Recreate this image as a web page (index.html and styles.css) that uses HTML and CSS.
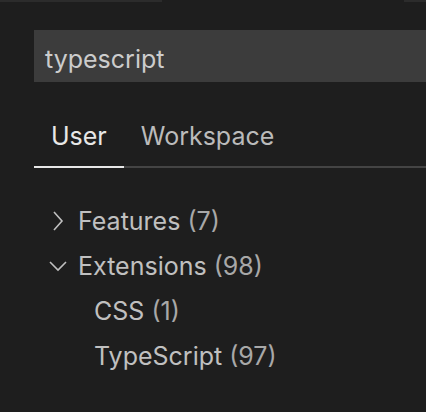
FILE: index.html
```html
<!DOCTYPE html>
<html>
<head>
<meta charset="utf-8">
<link rel="stylesheet" href="styles.css">
</head>
<body>
<div class="topstrip"><span class="seg seg-left"></span><span class="seg seg-right"></span></div>
<div class="panel">
  <div class="search">typescript</div>
  <div class="tabs">
    <div class="tab active">User</div>
    <div class="tab">Workspace</div>
    <div class="tab-rest"></div>
  </div>
  <ul class="tree">
    <li class="row lvl1">
      <svg class="chev" width="20" height="20" viewBox="0 0 20 20"><path d="M6 1 L14 10 L6 19" fill="none" stroke="#c0c0c0" stroke-width="1.6"/></svg>
      <span class="text">Features <span class="count">(7)</span></span>
    </li>
    <li class="row lvl1">
      <svg class="chev" width="20" height="20" viewBox="0 0 20 20"><path d="M2 6 L10 14 L18 6" fill="none" stroke="#c0c0c0" stroke-width="1.6"/></svg>
      <span class="text">Extensions <span class="count">(98)</span></span>
    </li>
    <li class="row lvl2"><span class="text">CSS <span class="count">(1)</span></span></li>
    <li class="row lvl2"><span class="text">TypeScript <span class="count">(97)</span></span></li>
  </ul>
</div>
</body>
</html>
```

FILE: styles.css
```css
html, body {
  margin: 0;
  padding: 0;
  background: #1e1e1e;
  width: 426px;
  height: 412px;
  overflow: hidden;
  font-family: Inter, "Liberation Sans", sans-serif;
}
.topstrip {
  display: flex;
  justify-content: space-between;
  height: 2px;
}
.seg { display: block; height: 2px; background: #2c2c2c; }
.seg-left { width: 162px; }
.seg-right { width: 22px; }
.panel {
  padding-left: 34px;
  padding-top: 28px;
}
.search {
  height: 52px;
  background: #3c3c3c;
  color: #cccccc;
  font-size: 25px;
  line-height: 58px;
  padding-left: 11px;
  box-sizing: border-box;
}
.tabs {
  display: flex;
  margin-top: 28px;
  align-items: flex-end;
}
.tab {
  font-size: 25px;
  color: #bbbbbb;
  padding: 0 17px 0 17px;
  height: 56px;
  line-height: 52px;
  border-bottom: 2px solid #444444;
}
.tab.active {
  color: #e7e7e7;
  border-bottom-color: #e7e7e7;
}
.tab-rest {
  flex: 1;
  border-bottom: 2px solid #444444;
}
.tree {
  list-style: none;
  margin: 0;
  padding: 0;
  margin-top: 30px;
}
.row {
  height: 45px;
  display: flex;
  align-items: center;
  font-size: 25px;
  color: #c0c0c0;
}
.lvl1 { padding-left: 14px; }
.lvl2 { padding-left: 60px; }
.chev { width: 20px; height: 20px; margin-right: 10px; flex: none; }
.count { color: #a8a8a8; }
```
